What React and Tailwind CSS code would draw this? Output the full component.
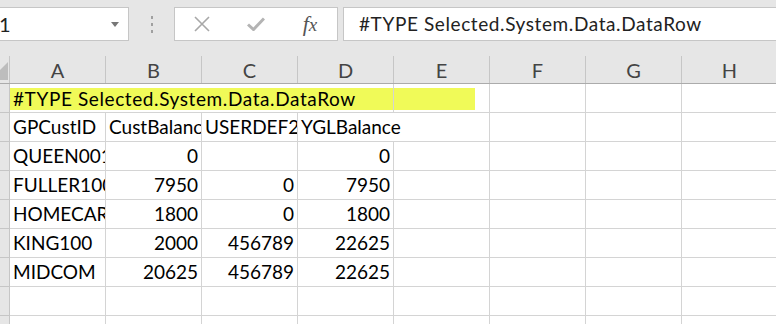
import React from 'react'

const cols = ['A', 'B', 'C', 'D', 'E', 'F', 'G', 'H']

const rows = [
  ['QUEEN001', '0', '', '0'],
  ['FULLER100', '7950', '0', '7950'],
  ['HOMECARE', '1800', '0', '1800'],
  ['KING100', '2000', '456789', '22625'],
  ['MIDCOM', '20625', '456789', '22625'],
  ['', '', '', ''],
  ['', '', '', ''],
]

function RowHead() {
  return <div className="w-[10px] h-full shrink-0 bg-[#e6e6e6] border-r border-b border-[#c6c6c6]" />
}

function Cell({ children, right, noBorder, clip = true }) {
  return (
    <div
      className={`w-[96px] h-full shrink-0 flex items-end pb-[3px] border-b border-[#d4d4d4] whitespace-nowrap text-black ${
        noBorder ? '' : 'border-r'
      } ${clip ? 'overflow-hidden' : 'overflow-visible relative z-10'} ${right ? 'justify-end pr-[3px]' : 'pl-[3px]'}`}
    >
      <span className="leading-[22px]">{children}</span>
    </div>
  )
}

export default function App() {
  return (
    <div className="w-[776px] h-[324px] overflow-hidden bg-white font-['Lato','Open_Sans',sans-serif] text-[19px]">
      {/* Formula bar */}
      <div className="h-[56px] bg-[#e6e6e6] flex items-start pt-[7px]">
        <div className="w-[129px] h-[34px] shrink-0 bg-white border border-l-0 border-[#c6c6c6] flex items-center justify-between pr-[9px]">
          <span className="text-[#222] -ml-[1px] text-[20px]">1</span>
          <svg width="8" height="5" viewBox="0 0 8 5"><path d="M0 0h8L4 5z" fill="#777" /></svg>
        </div>
        <div className="w-[45px] h-[34px] shrink-0 flex flex-col items-center justify-center gap-[4px]">
          <span className="w-[2px] h-[3px] bg-[#a0a0a0]" />
          <span className="w-[2px] h-[3px] bg-[#a0a0a0]" />
          <span className="w-[2px] h-[3px] bg-[#a0a0a0]" />
        </div>
        <div className="w-[164px] h-[34px] shrink-0 bg-white border border-[#c6c6c6] flex items-center">
          <div className="w-[54px] flex justify-center">
            <svg width="16" height="16" viewBox="0 0 16 16"><path d="M1 1L15 15M15 1L1 15" stroke="#a8a8a8" strokeWidth="1.6" /></svg>
          </div>
          <div className="w-[54px] flex justify-center">
            <svg width="18" height="14" viewBox="0 0 18 14"><path d="M1 7.5L6.5 12.5L17 1.5" stroke="#b4b4b4" strokeWidth="3" fill="none" /></svg>
          </div>
          <div className="w-[54px] flex justify-center">
            <span className="font-['Liberation_Serif',serif] italic text-[#555] text-[22px] leading-none">
              f<span className="text-[19px]">x</span>
            </span>
          </div>
        </div>
        <div className="flex-1 ml-[5px] h-[34px] bg-white border border-r-0 border-[#c6c6c6] flex items-center pl-[15px] text-[#222] whitespace-nowrap tracking-[0.6px] text-[19px]">
          #TYPE Selected.System.Data.DataRow
        </div>
      </div>

      {/* Column headers */}
      <div className="h-[28px] flex bg-[#e6e6e6] border-b border-[#ababab] text-[20px]">
        <div className="w-[10px] h-full shrink-0 border-r border-[#c6c6c6] overflow-hidden">
          <svg width="10" height="27" viewBox="0 0 10 27"><path d="M8 6V24H-10z" fill="#bdbdbd" /></svg>
        </div>
        {cols.map(c => (
          <div key={c} className="w-[96px] shrink-0 h-full border-r border-[#c6c6c6] flex items-center justify-center text-[#444]">
            {c}
          </div>
        ))}
      </div>

      {/* Row 1 */}
      <div className="h-[29px] flex">
        <RowHead />
        <div className="w-[384px] h-full shrink-0 border-r border-b border-[#d4d4d4] pt-[4px]">
          <div className="h-[22px] bg-[#f0fa58] flex items-end pl-[3px] text-black whitespace-nowrap tracking-[0.6px]">
            <span className="leading-[22px]">#TYPE Selected.System.Data.DataRow</span>
          </div>
        </div>
        <div className="w-[96px] h-full shrink-0 border-r border-b border-[#d4d4d4] pt-[4px]">
          <div className="w-[81px] h-[22px] bg-[#f0fa58]" />
        </div>
        {[0, 1, 2].map(i => (
          <div key={i} className="w-[96px] h-full shrink-0 border-r border-b border-[#d4d4d4]" />
        ))}
      </div>

      {/* Row 2 */}
      <div className="h-[29px] flex">
        <RowHead />
        <Cell>GPCustID</Cell>
        <Cell>CustBalance</Cell>
        <Cell>USERDEF2</Cell>
        <Cell noBorder clip={false}>YGLBalance</Cell>
        <Cell />
        <Cell />
        <Cell />
        <Cell />
      </div>

      {rows.map((r, ri) => (
        <div key={ri} className="h-[29px] flex">
          <RowHead />
          <Cell>{r[0]}</Cell>
          <Cell right>{r[1]}</Cell>
          <Cell right>{r[2]}</Cell>
          <Cell right>{r[3]}</Cell>
          <Cell />
          <Cell />
          <Cell />
          <Cell />
        </div>
      ))}
    </div>
  )
}
